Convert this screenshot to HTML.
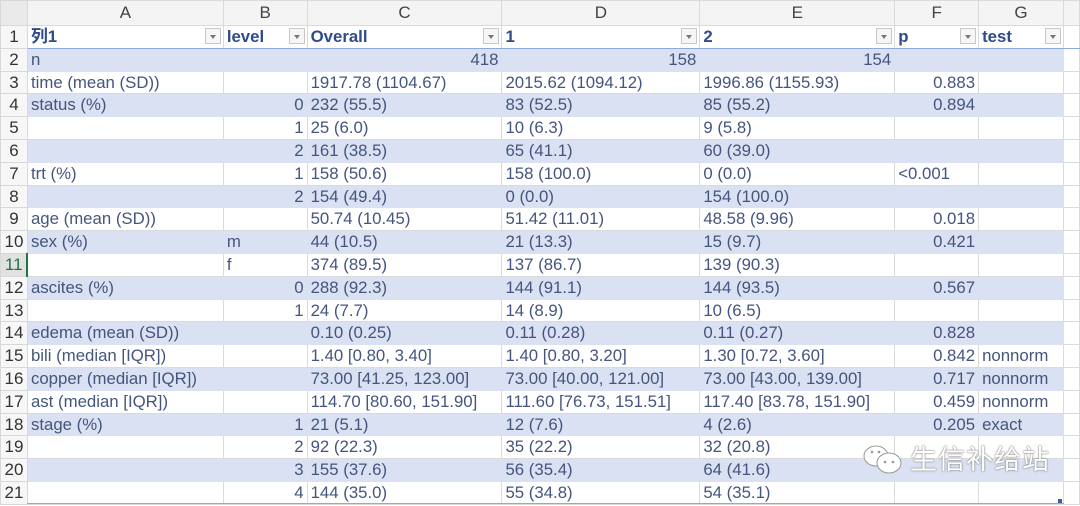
<!DOCTYPE html>
<html><head><meta charset="utf-8"><style>
body{margin:0;width:1080px;height:506px;overflow:hidden;background:#fff;font-family:"Liberation Sans","Noto Sans CJK SC",sans-serif;}
table{border-collapse:collapse;table-layout:fixed;position:absolute;left:0;top:0;}
td{height:21.8px;padding:0 3px;border:1px solid #dadada;font-size:16.8px;color:#44557e;white-space:nowrap;overflow:hidden;line-height:21.8px;box-sizing:border-box;}
td{height:22.8px}
td.rn{color:#333;text-align:center;background:#f7f7f7;border-color:#d8d8d8;font-size:17px;padding:0;}
tr.ch td{height:25px;background:#f4f4f4;color:#444;text-align:center;font-size:17px;}
tr.b td:not(.rn){background:#d9e1f2;border-color:#d9e1f2;}
tr.b td.e{background:#fff;border-color:#dadada}
td.r{text-align:right}
tr.h td:not(.rn){font-weight:bold;color:#2f4b8c;position:relative;border-bottom:1px solid #8ea9db}
.f{position:absolute;right:2px;top:2px;width:16px;height:16px;border:1px solid #c8c8c8;background:#f6f6f6;box-sizing:border-box}
.f:after{content:"";position:absolute;left:4px;top:6px;border-left:3px solid transparent;border-right:3px solid transparent;border-top:4px solid #777}
.sel td.rn{color:#217346;background:#e1e1e1;border-right:2px solid #217346}
.wm{position:absolute;left:910px;top:438px;color:#fff;font-size:27px;font-family:"Noto Sans CJK SC",sans-serif;text-shadow:0 0 2px #888,0 0 1px #666;letter-spacing:1px}
</style></head><body>
<table>
<colgroup><col style="width:27px"><col style="width:196px"><col style="width:84px"><col style="width:195px"><col style="width:198px"><col style="width:195px"><col style="width:84px"><col style="width:85px"><col style="width:16px"></colgroup>
<tr class="ch"><td class="rn" style="background:#eaeaea"></td><td>A</td><td>B</td><td>C</td><td>D</td><td>E</td><td>F</td><td>G</td><td></td></tr>
<tr class="h"><td class="rn">1</td><td>列1<span class="f"></span></td><td>level<span class="f"></span></td><td>Overall<span class="f"></span></td><td>1<span class="f"></span></td><td>2<span class="f"></span></td><td>p<span class="f"></span></td><td>test<span class="f"></span></td><td class="e" style="font-weight:normal"></td></tr>
<tr class="b"><td class="rn">2</td><td>n</td><td></td><td class="r">418</td><td class="r">158</td><td class="r">154</td><td></td><td></td><td class="e"></td></tr>
<tr><td class="rn">3</td><td>time (mean (SD))</td><td></td><td>1917.78 (1104.67)</td><td>2015.62 (1094.12)</td><td>1996.86 (1155.93)</td><td class="r">0.883</td><td></td><td></td></tr>
<tr class="b"><td class="rn">4</td><td>status (%)</td><td class="r">0</td><td>232 (55.5)</td><td>83 (52.5)</td><td>85 (55.2)</td><td class="r">0.894</td><td></td><td class="e"></td></tr>
<tr><td class="rn">5</td><td></td><td class="r">1</td><td>25 (6.0)</td><td>10 (6.3)</td><td>9 (5.8)</td><td></td><td></td><td></td></tr>
<tr class="b"><td class="rn">6</td><td></td><td class="r">2</td><td>161 (38.5)</td><td>65 (41.1)</td><td>60 (39.0)</td><td></td><td></td><td class="e"></td></tr>
<tr><td class="rn">7</td><td>trt (%)</td><td class="r">1</td><td>158 (50.6)</td><td>158 (100.0)</td><td>0 (0.0)</td><td>&lt;0.001</td><td></td><td></td></tr>
<tr class="b"><td class="rn">8</td><td></td><td class="r">2</td><td>154 (49.4)</td><td>0 (0.0)</td><td>154 (100.0)</td><td></td><td></td><td class="e"></td></tr>
<tr><td class="rn">9</td><td>age (mean (SD))</td><td></td><td>50.74 (10.45)</td><td>51.42 (11.01)</td><td>48.58 (9.96)</td><td class="r">0.018</td><td></td><td></td></tr>
<tr class="b"><td class="rn">10</td><td>sex (%)</td><td>m</td><td>44 (10.5)</td><td>21 (13.3)</td><td>15 (9.7)</td><td class="r">0.421</td><td></td><td class="e"></td></tr>
<tr class="sel"><td class="rn">11</td><td></td><td>f</td><td>374 (89.5)</td><td>137 (86.7)</td><td>139 (90.3)</td><td></td><td></td><td></td></tr>
<tr class="b"><td class="rn">12</td><td>ascites (%)</td><td class="r">0</td><td>288 (92.3)</td><td>144 (91.1)</td><td>144 (93.5)</td><td class="r">0.567</td><td></td><td class="e"></td></tr>
<tr><td class="rn">13</td><td></td><td class="r">1</td><td>24 (7.7)</td><td>14 (8.9)</td><td>10 (6.5)</td><td></td><td></td><td></td></tr>
<tr class="b"><td class="rn">14</td><td>edema (mean (SD))</td><td></td><td>0.10 (0.25)</td><td>0.11 (0.28)</td><td>0.11 (0.27)</td><td class="r">0.828</td><td></td><td class="e"></td></tr>
<tr><td class="rn">15</td><td>bili (median [IQR])</td><td></td><td>1.40 [0.80, 3.40]</td><td>1.40 [0.80, 3.20]</td><td>1.30 [0.72, 3.60]</td><td class="r">0.842</td><td>nonnorm</td><td></td></tr>
<tr class="b"><td class="rn">16</td><td>copper (median [IQR])</td><td></td><td>73.00 [41.25, 123.00]</td><td>73.00 [40.00, 121.00]</td><td>73.00 [43.00, 139.00]</td><td class="r">0.717</td><td>nonnorm</td><td class="e"></td></tr>
<tr><td class="rn">17</td><td>ast (median [IQR])</td><td></td><td>114.70 [80.60, 151.90]</td><td>111.60 [76.73, 151.51]</td><td>117.40 [83.78, 151.90]</td><td class="r">0.459</td><td>nonnorm</td><td></td></tr>
<tr class="b"><td class="rn">18</td><td>stage (%)</td><td class="r">1</td><td>21 (5.1)</td><td>12 (7.6)</td><td>4 (2.6)</td><td class="r">0.205</td><td>exact</td><td class="e"></td></tr>
<tr><td class="rn">19</td><td></td><td class="r">2</td><td>92 (22.3)</td><td>35 (22.2)</td><td>32 (20.8)</td><td></td><td></td><td></td></tr>
<tr class="b"><td class="rn">20</td><td></td><td class="r">3</td><td>155 (37.6)</td><td>56 (35.4)</td><td>64 (41.6)</td><td></td><td></td><td class="e"></td></tr>
<tr><td class="rn">21</td><td></td><td class="r">4</td><td>144 (35.0)</td><td>55 (34.8)</td><td>54 (35.1)</td><td></td><td></td><td></td></tr>
</table>
<div style="position:absolute;left:27px;top:503px;width:1037px;height:1px;background:#8ea9db"></div>
<div style="position:absolute;left:1058px;top:499px;width:4px;height:4px;background:#3b5ea8"></div>
<svg style="position:absolute;left:862px;top:443px" width="46" height="36" viewBox="0 0 46 36">
<ellipse cx="14" cy="13" rx="12" ry="10" fill="#fff" stroke="#999" stroke-width="1"/>
<ellipse cx="27" cy="20" rx="12" ry="10" fill="#fff" stroke="#999" stroke-width="1"/>
<circle cx="23" cy="19" r="1.3" fill="#999"/><circle cx="31" cy="19" r="1.3" fill="#999"/>
<circle cx="10" cy="9" r="1.3" fill="#999"/><circle cx="17" cy="9" r="1.3" fill="#999"/>
</svg>
<div class="wm">生信补给站</div>
</body></html>
